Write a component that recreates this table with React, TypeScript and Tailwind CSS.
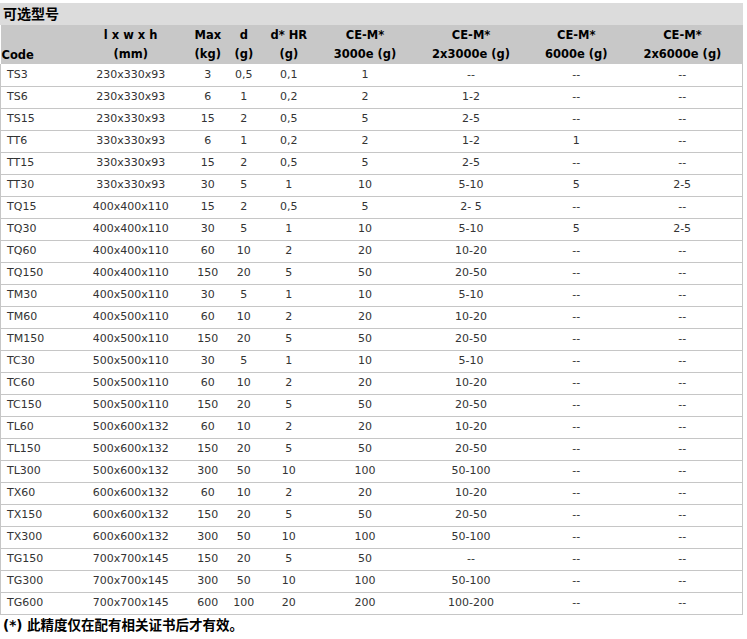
import React from "react";

const rows: string[][] = [
  ["TS3", "230x330x93", "3", "0,5", "0,1", "1", "--", "--", "--"],
  ["TS6", "230x330x93", "6", "1", "0,2", "2", "1-2", "--", "--"],
  ["TS15", "230x330x93", "15", "2", "0,5", "5", "2-5", "--", "--"],
  ["TT6", "330x330x93", "6", "1", "0,2", "2", "1-2", "1", "--"],
  ["TT15", "330x330x93", "15", "2", "0,5", "5", "2-5", "--", "--"],
  ["TT30", "330x330x93", "30", "5", "1", "10", "5-10", "5", "2-5"],
  ["TQ15", "400x400x110", "15", "2", "0,5", "5", "2- 5", "--", "--"],
  ["TQ30", "400x400x110", "30", "5", "1", "10", "5-10", "5", "2-5"],
  ["TQ60", "400x400x110", "60", "10", "2", "20", "10-20", "--", "--"],
  ["TQ150", "400x400x110", "150", "20", "5", "50", "20-50", "--", "--"],
  ["TM30", "400x500x110", "30", "5", "1", "10", "5-10", "--", "--"],
  ["TM60", "400x500x110", "60", "10", "2", "20", "10-20", "--", "--"],
  ["TM150", "400x500x110", "150", "20", "5", "50", "20-50", "--", "--"],
  ["TC30", "500x500x110", "30", "5", "1", "10", "5-10", "--", "--"],
  ["TC60", "500x500x110", "60", "10", "2", "20", "10-20", "--", "--"],
  ["TC150", "500x500x110", "150", "20", "5", "50", "20-50", "--", "--"],
  ["TL60", "500x600x132", "60", "10", "2", "20", "10-20", "--", "--"],
  ["TL150", "500x600x132", "150", "20", "5", "50", "20-50", "--", "--"],
  ["TL300", "500x600x132", "300", "50", "10", "100", "50-100", "--", "--"],
  ["TX60", "600x600x132", "60", "10", "2", "20", "10-20", "--", "--"],
  ["TX150", "600x600x132", "150", "20", "5", "50", "20-50", "--", "--"],
  ["TX300", "600x600x132", "300", "50", "10", "100", "50-100", "--", "--"],
  ["TG150", "700x700x145", "150", "20", "5", "50", "--", "--", "--"],
  ["TG300", "700x700x145", "300", "50", "10", "100", "50-100", "--", "--"],
  ["TG600", "700x700x145", "600", "100", "20", "200", "100-200", "--", "--"],
];

const widths = [73, 114, 40, 32, 58, 94, 118, 92, 120];

const headers: [string, string][] = [
  ["l x w x h", "(mm)"],
  ["Max", "(kg)"],
  ["d", "(g)"],
  ["d* HR", "(g)"],
  ["CE-M*", "3000e (g)"],
  ["CE-M*", "2x3000e (g)"],
  ["CE-M*", "6000e (g)"],
  ["CE-M*", "2x6000e (g)"],
];

export default function App() {
  return (
    <div
      className="w-[747px] h-[639px] bg-white pt-[3px]"
      style={{ fontFamily: "'DejaVu Sans', 'Noto Sans CJK SC', sans-serif" }}
    >
      <div className="w-[743px]">
        <div className="h-[22px] bg-[#dcdcdc] flex items-center pl-[3px] text-[14px] font-bold text-black">
          可选型号
        </div>
        <table className="table-fixed border-collapse w-[743px] text-[11px]">
          <colgroup>
            {widths.map((w, i) => (
              <col key={i} style={{ width: w }} />
            ))}
          </colgroup>
          <thead>
            <tr className="bg-[#c8c8c8] h-[39px] font-bold text-black text-[11.5px]">
              <th className="text-left align-bottom pl-[1px] pb-0 leading-[18px] font-bold">Code</th>
              {headers.map(([a, b], i) => (
                <th key={i} className="text-center align-middle leading-[19px] font-bold whitespace-nowrap pt-[1px]">
                  <div>{a}</div>
                  <div>{b}</div>
                </th>
              ))}
            </tr>
          </thead>
          <tbody>
            {rows.map((r, ri) => (
              <tr key={ri} className="h-[22px] border-b border-[#c6c6c6] text-[#333]">
                {r.map((c, ci) => (
                  <td
                    key={ci}
                    className={
                      ci === 0
                        ? "text-left pl-[6px] border-l border-[#c6c6c6] p-0 pt-[1px]"
                        : ci === 8
                        ? "text-center border-r border-[#c6c6c6] p-0 pt-[1px]"
                        : "text-center p-0 pt-[1px] whitespace-pre"
                    }
                  >
                    {c}
                  </td>
                ))}
              </tr>
            ))}
          </tbody>
        </table>
        <div className="pl-[3px] pt-[1px] text-[13.5px] font-bold text-black leading-[18px]">
          (*) 此精度仅在配有相关证书后才有效。
        </div>
      </div>
    </div>
  );
}
